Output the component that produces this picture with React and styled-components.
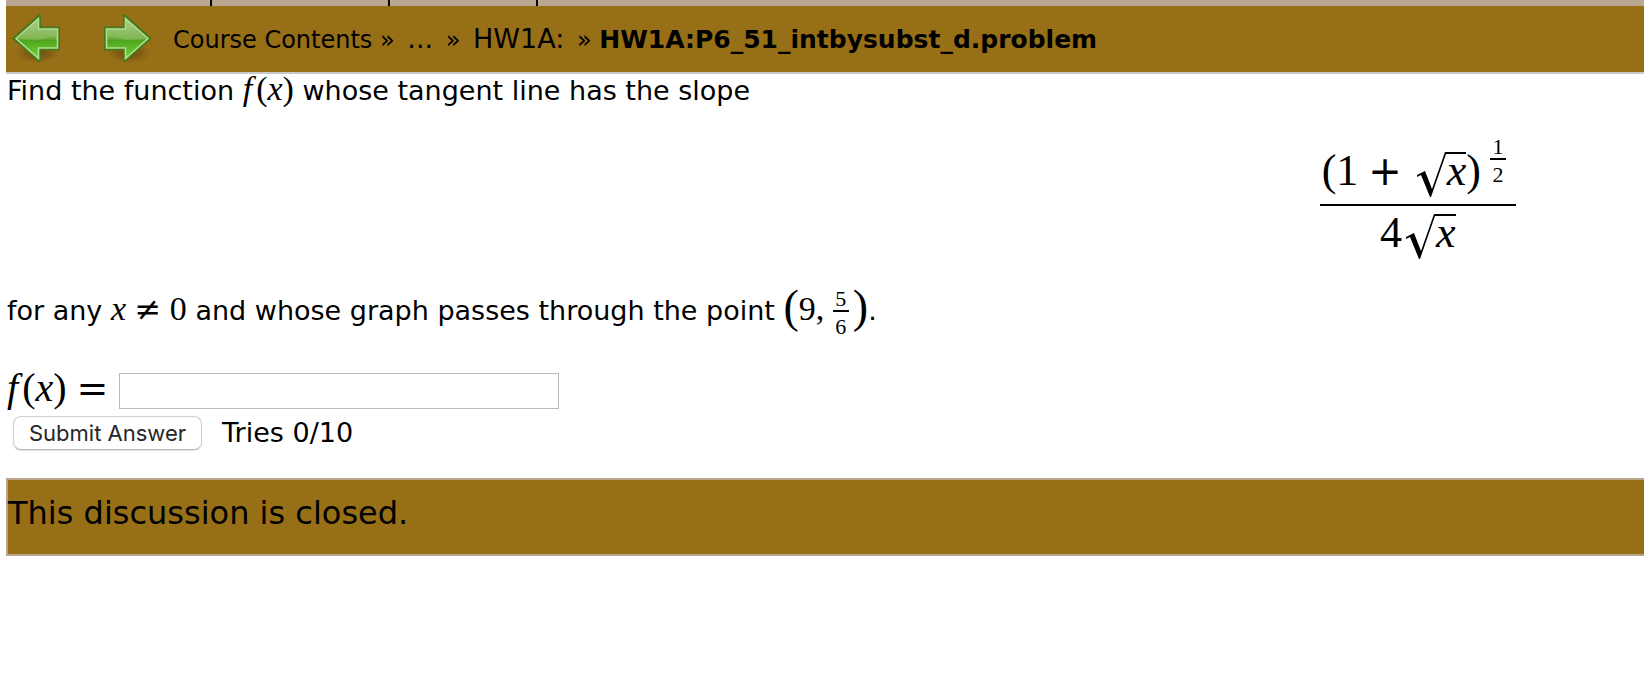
import React, { useState } from "react";
import styled, { createGlobalStyle } from "styled-components";

export default function App() {
  const [answer, setAnswer] = useState("");

  return (
    <Page>
      <GlobalStyle />
      <TabStrip>
        <Tab $width={206} />
        <Tab $width={178} />
        <Tab $width={148} />
      </TabStrip>

      <Header>
        <NavLink href="#prev" aria-label="Previous">
          <Arrow id="prev" />
        </NavLink>
        <NavLink href="#next" aria-label="Next">
          <Arrow id="next" flip />
        </NavLink>
        <Breadcrumbs>
          <Crumb href="#contents">Course Contents</Crumb> » <Crumb href="#more" $large>...</Crumb> »{" "}
          <Crumb href="#hw1a" $large>HW1A:</Crumb> » <Current>HW1A:P6_51_intbysubst_d.problem</Current>
        </Breadcrumbs>
      </Header>

      <Problem>
        <Line>
          Find the function <Math><FnName>f</FnName>(<i>x</i>)</Math> whose tangent line has the slope
        </Line>

        <Equation>
          <BigFraction>
            <Numerator>
              <span>(1</span>
              <Plus>+</Plus>
              <Root />
              <span>)</span>
              <Exponent>
                <Fraction top="1" bottom="2" />
              </Exponent>
            </Numerator>
            <Denominator>
              <Factor>4</Factor>
              <Root />
            </Denominator>
          </BigFraction>
        </Equation>

        <Line>
          for any <Math><i>x</i> <Operator $size={32}>≠</Operator> 0</Math> and whose graph passes through the point{" "}
          <Math>
            <BigParen>(</BigParen>9, <InlineFraction><Fraction top="5" bottom="6" /></InlineFraction>
            <BigParen>)</BigParen>
          </Math>.
        </Line>

        <form onSubmit={(e) => e.preventDefault()}>
          <AnswerRow>
            <AnswerLabel htmlFor="answer">
              <FnName>f</FnName>(<i>x</i>) <Operator $size={38}>=</Operator>
            </AnswerLabel>
            <AnswerInput id="answer" value={answer} onChange={(e) => setAnswer(e.target.value)} />
          </AnswerRow>
          <SubmitRow>
            <SubmitButton type="submit">Submit Answer</SubmitButton>
            <span>Tries 0/10</span>
          </SubmitRow>
        </form>
      </Problem>

      <Discussion>This discussion is closed.</Discussion>
    </Page>
  );
}

function Arrow({ id, flip }) {
  return (
    <svg width="48" height="50" viewBox="0 0 48 50" aria-hidden="true">
      <defs>
        <linearGradient id={id + "-body"} x1="0" y1="0" x2="0" y2="1">
          <stop offset="0" stopColor="#a3c77c" />
          <stop offset="0.5" stopColor="#6fad3c" />
          <stop offset="0.55" stopColor="#4fa51f" />
          <stop offset="1" stopColor="#72d636" />
        </linearGradient>
        <radialGradient id={id + "-shadow"}>
          <stop offset="0" stopColor="#4a3305" stopOpacity="0.6" />
          <stop offset="1" stopColor="#4a3305" stopOpacity="0" />
        </radialGradient>
      </defs>
      <ellipse cx="25" cy="39" rx="22" ry="10" fill={`url(#${id}-shadow)`} />
      <g transform={flip ? "translate(48 0) scale(-1 1)" : undefined}>
        <path d="M0 24.5 L26.5 0.5 H29 V12.5 H48 V36.5 H29 V48 H26.5 Z" fill="#447a17" />
        <path d="M4 24.5 L26.5 4.5 V15 H45.5 V34 H26.5 V44.5 Z" fill={`url(#${id}-body)`} stroke="#b7dc95" strokeWidth="1.6" />
        <path d="M6 24 L25 7 V16 H44 V23 C34 22 30 27 20 26 C14 25 10 26 6 24 Z" fill="#ffffff" opacity="0.12" />
      </g>
    </svg>
  );
}

function Root() {
  return (
    <RootBox>
      <svg width="30" height="46" viewBox="0 0 30 46" aria-hidden="true">
        <path d="M0 23 L8 19 L15 37 L28 0 H30 V2 H29 L14 45 H13 L4 23 L0 25 Z" fill="#000" />
      </svg>
      <Radicand>x</Radicand>
    </RootBox>
  );
}

function Fraction({ top, bottom }) {
  return (
    <SmallFraction>
      <Over>{top}</Over>
      <Under>{bottom}</Under>
    </SmallFraction>
  );
}

// Styled Components

const GlobalStyle = createGlobalStyle`
  body {
    margin: 0;
    background: #fff;
    color: #000;
    font-family: "DejaVu Sans", Verdana, sans-serif;
    font-size: 27px;
  }
`;

const Page = styled.div`
  padding-left: 6px;
`;

const TabStrip = styled.div`
  display: flex;
  height: 6px;
  background: #baa892;
`;

const Tab = styled.div`
  box-sizing: border-box;
  width: ${(p) => p.$width}px;
  border-right: 2px solid #000;
`;

const Header = styled.header`
  display: flex;
  align-items: center;
  height: 66px;
  padding-left: 6px;
  background: #976f17;
  border-bottom: 2px solid #c8c8c8;
`;

const NavLink = styled.a`
  display: flex;
  margin-right: 44px;

  & + & {
    margin-right: 21px;
  }
`;

const Breadcrumbs = styled.nav`
  font-size: 24px;
  line-height: 32px;
  white-space: nowrap;
`;

const Crumb = styled.a`
  margin: 0 ${(p) => (p.$large ? 5 : 0)}px;
  color: inherit;
  text-decoration: none;
  font-size: ${(p) => (p.$large ? 27 : 24)}px;
`;

const Current = styled.b`
  font-size: 25px;
`;

const Problem = styled.main`
  padding-left: 1px;
`;

const Line = styled.p`
  margin: 0;
  line-height: 34px;
`;

const Math = styled.span`
  font-family: "Liberation Serif", "Times New Roman", serif;
  font-size: 34px;
  line-height: 28px;
`;

const FnName = styled.i`
  padding-right: 4px;
`;

const Operator = styled.span`
  font-family: "DejaVu Sans", sans-serif;
  font-size: ${(p) => p.$size}px;
`;

const Equation = styled.div`
  display: flex;
  justify-content: flex-end;
  margin: 29px 0 34px;
  padding-right: 128px;
  font-family: "Liberation Serif", "Times New Roman", serif;
  font-size: 44px;
  line-height: 44px;
`;

const BigFraction = styled.div`
  display: flex;
  flex-direction: column;
`;

const Numerator = styled.div`
  display: flex;
  align-items: flex-end;
  padding: 0 10px 11px 2px;
  border-bottom: 2px solid #000;
`;

const Denominator = styled.div`
  display: flex;
  justify-content: center;
  align-items: flex-end;
  padding-top: 5px;
`;

const Plus = styled.span`
  margin: 0 15px 0 10px;
  font-family: "DejaVu Sans", sans-serif;
  font-size: 40px;
`;

const Factor = styled.span`
  margin-right: 4px;
`;

const RootBox = styled.span`
  display: flex;
  height: 41px;
`;

const Radicand = styled.i`
  height: 34px;
  line-height: 34px;
  border-top: 2px solid #000;
`;

const Exponent = styled.span`
  margin: 0 0 8px 9px;
`;

const SmallFraction = styled.span`
  display: flex;
  flex-direction: column;
  width: 16px;
  font-size: 22px;
  line-height: 20px;
  text-align: center;
`;

const Over = styled.span`
  padding-bottom: 1px;
  border-bottom: 2px solid #000;
`;

const Under = styled.span`
  padding-top: 5px;
`;

/* the box sits on the baseline of its upper digit */
const InlineFraction = styled.span`
  display: inline-block;
  margin-right: 4px;
  vertical-align: 14px;
`;

const BigParen = styled.span`
  font-size: 46px;
  vertical-align: -2px;
`;

const AnswerRow = styled.div`
  display: flex;
  margin-top: 36px;
`;

const AnswerLabel = styled.label`
  width: 112px;
  font-family: "Liberation Serif", "Times New Roman", serif;
  font-size: 40px;
  line-height: 30px;
  white-space: nowrap;
`;

const AnswerInput = styled.input`
  box-sizing: border-box;
  width: 440px;
  height: 36px;
  padding: 2px 6px;
  border: 1px solid #b9b9b9;
  font: inherit;
  font-size: 22px;
`;

const SubmitRow = styled.div`
  display: flex;
  align-items: center;
  gap: 20px;
  margin: 7px 0 28px 6px;
  line-height: 34px;
`;

const SubmitButton = styled.button`
  box-sizing: border-box;
  height: 34px;
  padding: 0 15px;
  border: 1px solid #d0d0d0;
  border-bottom-color: #b8b8b8;
  border-radius: 8px;
  background: #fff;
  box-shadow: 0 1px 1px #e2e2e2;
  color: #262626;
  font-family: Inter, sans-serif;
  font-size: 22px;
  line-height: 32px;
`;

const Discussion = styled.footer`
  padding: 13px 0 21px;
  border: 2px solid #b9a48c;
  border-right: none;
  background: #976f17;
  font-size: 32px;
  line-height: 40px;
`;
